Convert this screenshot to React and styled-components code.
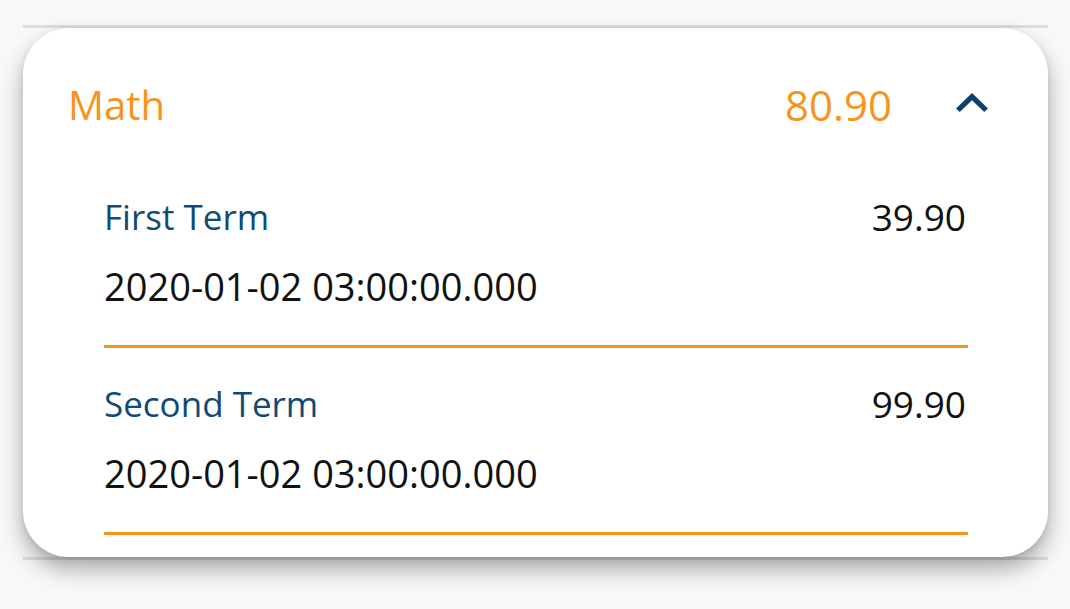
import styled, { createGlobalStyle } from "styled-components"

const GlobalStyle = createGlobalStyle`
    html, body {
        margin: 0;
        padding: 0;
        background: #f8f8f8;
    }
    body {
        font-family: "Open Sans", "Noto Sans", sans-serif;
    }
`

const Page = styled.div`
    width: 1070px;
    height: 609px;
    padding: 25px 22px 0 23px;
    box-sizing: border-box;
`

const Tile = styled.div`
    border-top: 3px solid #dddddd;
    border-bottom: 3px solid #dddddd;
`

const Card = styled.div`
    background: #ffffff;
    border-radius: 46px;
    box-shadow: 0 12px 22px rgba(0, 0, 0, 0.32), 0 2px 6px rgba(0, 0, 0, 0.08);
    padding-bottom: 22px;
    position: relative;
`

const Header = styled.div`
    display: flex;
    align-items: center;
    padding: 48px 60px 28px 45px;
`

const Subject = styled.span`
    flex: 1;
    font-size: 40px;
    line-height: 57px;
    color: #f7941d;
`

const Total = styled.span`
    font-size: 42px;
    line-height: 57px;
    color: #f7941d;
`

const Toggle = styled.div`
    display: flex;
    margin-left: 64px;
    margin-top: -4px;
    color: #0e426c;
`

const Rows = styled.div`
    padding: 0 80px 0 81px;
`

const Row = styled.div`
    display: flex;
    flex-direction: column;
    gap: 25px;
    padding: 34px 0 37px;
    border-bottom: 3px solid #f7941d;
`

const Line = styled.div`
    display: flex;
    justify-content: space-between;
    align-items: center;
    font-size: ${(p) => p.size || 38}px;
    line-height: 44px;
    color: ${(p) => p.color || "#111111"};
`

const Score = styled.span`
    font-size: 37px;
    color: #111111;
    padding-right: 2px;
`

const terms = [
    { name: "First Term", score: "39.90", date: "2020-01-02 03:00:00.000" },
    { name: "Second Term", score: "99.90", date: "2020-01-02 03:00:00.000" },
]

const ChevronUp = () => (
    <svg width="32" height="19" viewBox="6 8 12 7.41" preserveAspectRatio="none">
        <path d="M12 8l-6 6 1.41 1.41L12 10.83l4.59 4.58L18 14z" fill="currentColor" />
    </svg>
)

const App = () => {
    return (
        <Page>
            <GlobalStyle />
            <Tile>
                <Card>
                    <Header>
                        <Subject>Math</Subject>
                        <Total>80.90</Total>
                        <Toggle>
                            <ChevronUp />
                        </Toggle>
                    </Header>
                    <Rows>
                        {terms.map((t) => (
                            <Row key={t.name}>
                                <Line color="#124a76" size={35}>
                                    <span>{t.name}</span>
                                    <Score>{t.score}</Score>
                                </Line>
                                <Line>{t.date}</Line>
                            </Row>
                        ))}
                    </Rows>
                </Card>
            </Tile>
        </Page>
    )
}

export default App
